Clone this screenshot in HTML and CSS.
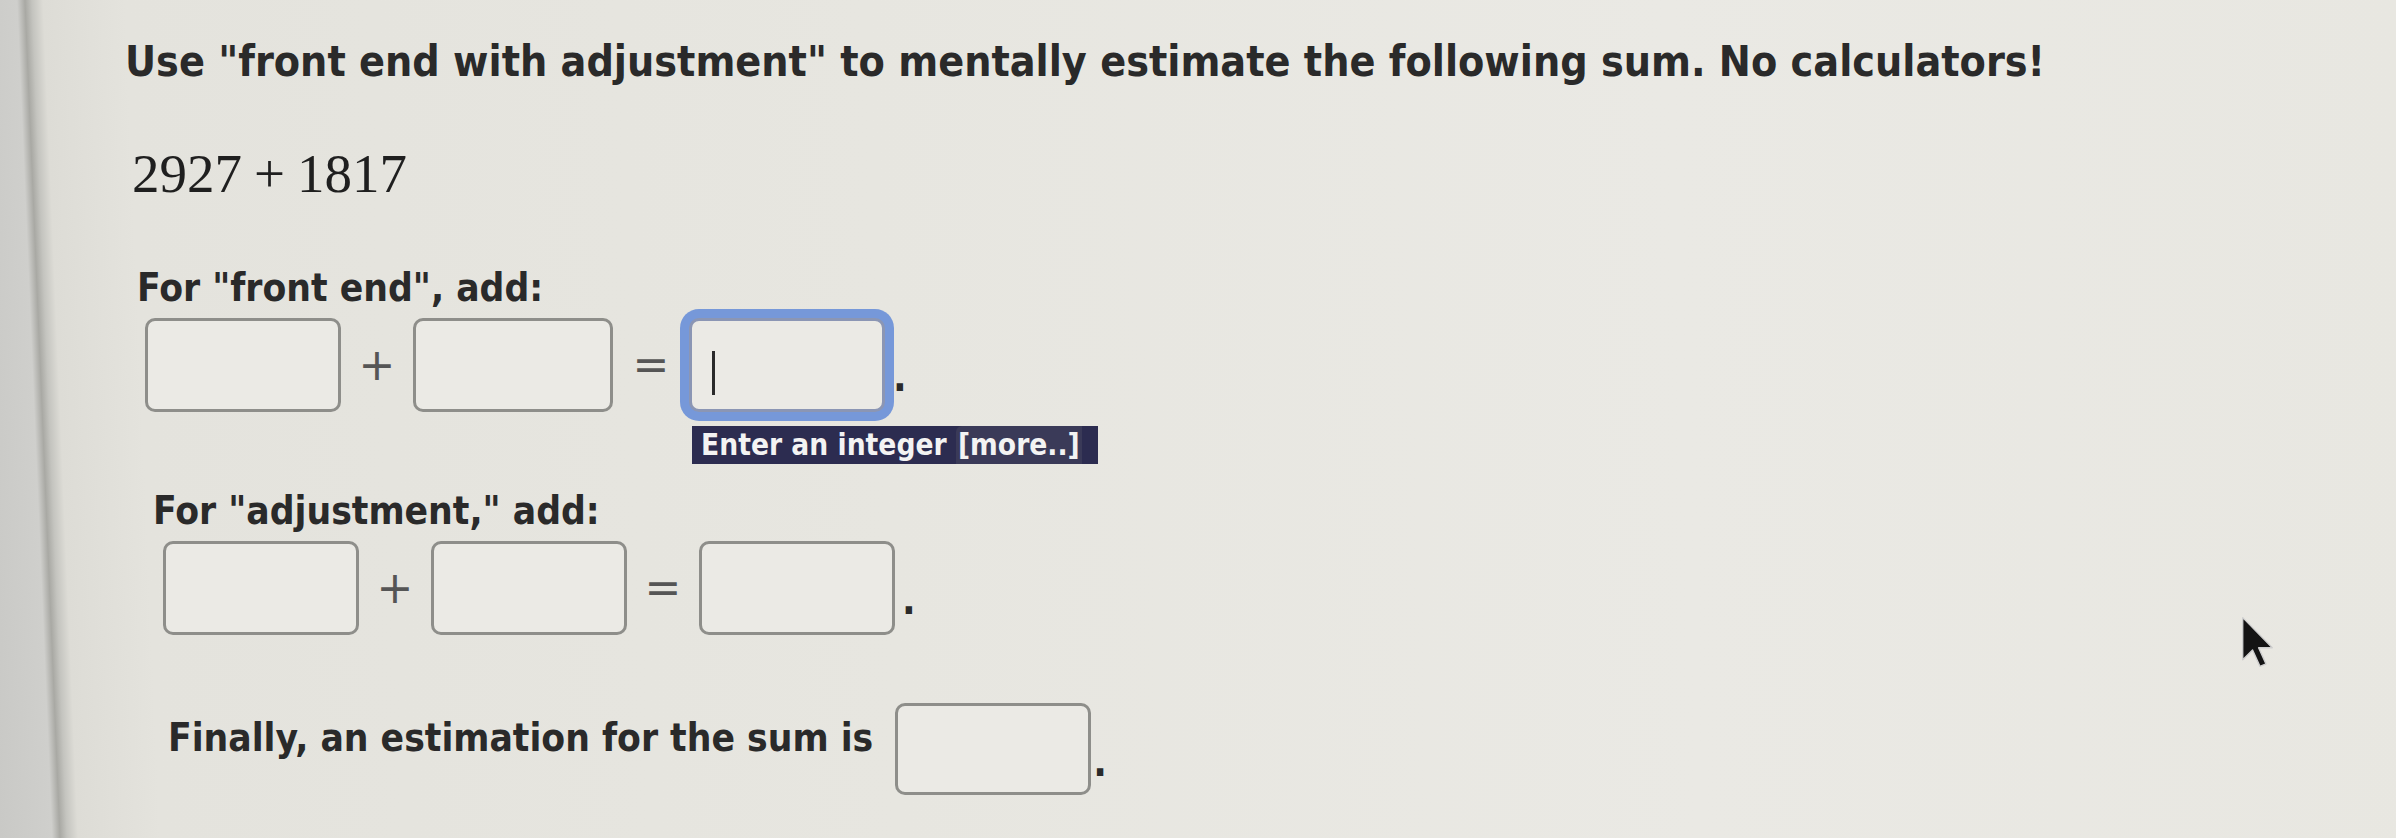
FILE: index.html
```html
<!DOCTYPE html>
<html lang="en">
<head>
<meta charset="utf-8">
<title>Front end with adjustment</title>
<link rel="stylesheet" href="styles.css">
</head>
<body>
<div class="screen">
  <div class="question">
    <p class="prompt">Use "front end with adjustment" to mentally estimate the following sum. No calculators!</p>
    <div class="math">2927<span class="mop">+</span>1817</div>

    <p class="label label-front">For "front end", add:</p>
    <div class="eq eq-front">
      <span class="box"></span>
      <span class="op">+</span>
      <span class="box box-wide"></span>
      <span class="op op-eq">=</span>
      <span class="box focused">
        <span class="caret"></span>
        <span class="tip">Enter an integer <span class="more">[more..]</span></span>
      </span>
      <span class="dot dot-front">.</span>
    </div>

    <p class="label label-adj">For "adjustment," add:</p>
    <div class="eq eq-adj">
      <span class="box"></span>
      <span class="op">+</span>
      <span class="box"></span>
      <span class="op op-eq">=</span>
      <span class="box"></span>
      <span class="dot dot-adj">.</span>
    </div>

    <div class="final">
      <span class="final-text">Finally, an estimation for the sum is</span>
      <span class="box"></span>
      <span class="dot dot-final">.</span>
    </div>
  </div>

  <svg class="pointer" viewBox="0 0 12 19" width="33" height="52" aria-hidden="true">
    <path d="M0.6 0.6 L0.6 16 L4.2 12.4 L6.9 18.4 L9.1 17.5 L6.4 11.6 L11.4 11.6 Z" fill="#141414" stroke="#cfcfcf" stroke-width="0.5" stroke-linejoin="round"/>
  </svg>
</div>
</body>
</html>
```

FILE: styles.css
```css
html, body {
  margin: 0;
  padding: 0;
}

body {
  font-family: "DejaVu Sans Condensed", "DejaVu Sans", sans-serif;
  font-stretch: condensed;
  font-weight: bold;
  color: #2a2a2a;
}

.screen {
  position: relative;
  width: 2396px;
  height: 838px;
  overflow: hidden;
  background:
    linear-gradient(87.6deg,
      #c9c9c6 0px,
      #cfcfcc 52px,
      #a9a9a4 60px,
      #c4c4bf 67px,
      #dddcd6 78px,
      #e4e3dd 160px,
      #e7e6e0 900px,
      #eae9e4 1700px,
      #e8e7e1 100%);
}

.question {
  padding-top: 37px;
}

.prompt {
  margin: 0 0 0 125px;
  font-size: 42.6px;
  line-height: 48px;
  white-space: nowrap;
}

.math {
  margin: 57px 0 0 132px;
  font-family: "Liberation Serif", "Times New Roman", serif;
  font-stretch: normal;
  font-weight: normal;
  font-size: 55px;
  line-height: 64px;
  color: #1f1f1f;
}

.mop {
  margin: 0 12px;
}

.label {
  margin: 0;
  font-size: 38.6px;
  line-height: 48px;
  white-space: nowrap;
}

.label-front {
  margin: 58px 0 0 137px;
}

.label-adj {
  margin: 75px 0 0 153px;
}

.eq {
  display: flex;
  align-items: center;
  height: 94px;
  margin-top: 6px;
}

.eq-front {
  margin-left: 145px;
}

.eq-adj {
  margin-left: 163px;
}

.box {
  position: relative;
  box-sizing: border-box;
  width: 196px;
  height: 94px;
  border: 3px solid #8e8e8a;
  border-radius: 10px;
  background: #ebeae5;
  flex: none;
}

.box-wide {
  width: 200px;
}

.op {
  width: 72px;
  text-align: center;
  font-family: "DejaVu Sans", sans-serif;
  font-stretch: normal;
  font-weight: normal;
  font-size: 44px;
  line-height: 48px;
  color: #555;
  flex: none;
}

.eq-front .op-eq {
  width: 76px;
}

.focused {
  border-color: #8b96b4;
  box-shadow: 0 0 0 9px #7698d9;
  border-radius: 10px;
}

.caret {
  position: absolute;
  left: 20px;
  top: 30px;
  width: 3px;
  height: 44px;
  background: #2a2a2a;
}

.tip {
  position: absolute;
  left: 0;
  top: 105px;
  height: 38px;
  padding: 0 16px 0 9px;
  background: #2c2c50;
  color: #f3f3f3;
  font-size: 29.6px;
  line-height: 38px;
  white-space: nowrap;
  z-index: 2;
}

.more {
  display: inline-block;
  padding: 0 2px;
  background: #3a3a58;
  border-radius: 6px 0 0 0;
}

.dot {
  align-self: flex-start;
  margin-top: 35px;
  font-size: 40px;
  line-height: 48px;
  flex: none;
}

.dot-front {
  margin-left: 8px;
}

.dot-adj {
  margin-left: 7px;
}

.final {
  display: flex;
  align-items: flex-start;
  margin: 68px 0 0 168px;
  height: 92px;
}

.final-text {
  margin: 11px 22px 0 0;
  font-size: 38.6px;
  line-height: 48px;
  white-space: nowrap;
}

.final .box {
  height: 92px;
}

.dot-final {
  margin-left: 2px;
}

.pointer {
  position: absolute;
  left: 2241px;
  top: 616px;
}
```
